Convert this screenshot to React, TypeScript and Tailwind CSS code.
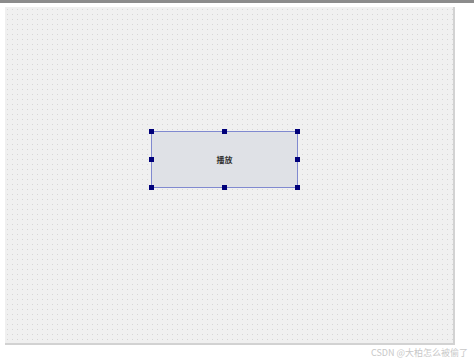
import React from 'react';

const handles = [
  'left-[-2px] top-[-2px]',
  'left-[71px] top-[-2px]',
  'right-[-2px] top-[-2px]',
  'left-[-2px] top-[26px]',
  'right-[-2px] top-[26px]',
  'left-[-2px] bottom-[-2px]',
  'left-[71px] bottom-[-2px]',
  'right-[-2px] bottom-[-2px]',
];

export default function App() {
  return (
    <div className="w-[474px] h-[360px] bg-white overflow-hidden flex flex-col font-['Liberation_Sans','Noto_Sans_CJK_SC',sans-serif]">
      {/* top edge of the designer window */}
      <div className="h-[3px] w-full bg-[#8c8c8c]" />

      {/* form canvas */}
      <div className="pl-[5px] pt-[4px]">
        <div className="relative w-[450px] h-[338px] bg-[#f0f0f0] border-r-2 border-b-2 border-[#d2d2d2] bg-[radial-gradient(#d6d6d6_0.7px,transparent_0.8px)] bg-[length:5px_5px]">
          {/* selected push button */}
          <div className="absolute left-[146px] top-[124px] w-[147px] h-[57px]">
            <div className="w-full h-full bg-[#dfe1e6] border border-[#8089d0] flex items-center justify-center">
              <span className="text-[8px] font-bold text-[#333] font-['Noto_Sans_CJK_SC',sans-serif]">播放</span>
            </div>
            {handles.map((h) => (
              <div key={h} className={`absolute w-[5px] h-[5px] bg-[#00007a] ${h}`} />
            ))}
          </div>
        </div>
      </div>

      {/* watermark */}
      <div className="flex justify-end pr-[6px] mt-[1px]">
        <span className="text-[9px] leading-[14px] text-[#c8c8c8] font-['Noto_Sans_CJK_SC',sans-serif]">CSDN @大柏怎么被偷了</span>
      </div>
    </div>
  );
}
